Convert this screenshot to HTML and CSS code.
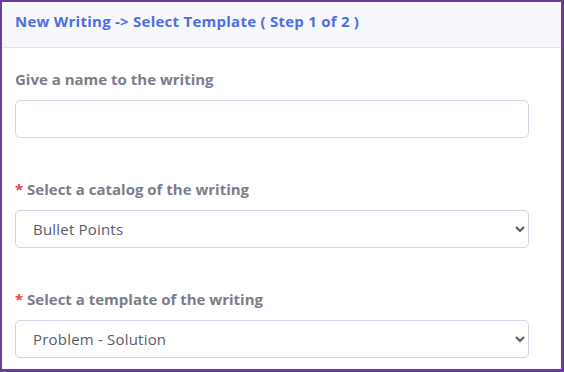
FILE: index.html
```html
<!DOCTYPE html>
<html lang="en">
<head>
  <meta charset="UTF-8" />
  <title>New Writing</title>
  <link rel="stylesheet" href="styles.css">
</head>
<body>
  <div class="card">
    <div class="card-header">New Writing -&gt; Select Template ( Step 1 of 2 )</div>

    <div class="card-body">
      <div class="field">
        <label class="field-label" for="writingName">Give a name to the writing</label>
        <input type="text" id="writingName" class="field-input" />
      </div>

      <div class="field">
        <label class="field-label" for="catalog"><span class="req">*</span> Select a catalog of the writing</label>
        <select id="catalog" class="field-input">
          <option>Bullet Points</option>
        </select>
      </div>

      <div class="field">
        <label class="field-label" for="template"><span class="req">*</span> Select a template of the writing</label>
        <select id="template" class="field-input">
          <option>Problem - Solution</option>
        </select>
      </div>
    </div>
  </div>
</body>
</html>
```

FILE: styles.css
```css
:root {
  --frame-color: #6b3a9f;
  --header-bg: #f7f8fc;
  --header-text: #4d6fe3;
  --label-color: #7c7d8a;
  --input-border: #d8d4e8;
  --input-text: #5a5c66;
  --required: #e8453c;
}

* {
  box-sizing: border-box;
  margin: 0;
  padding: 0;
}

body {
  font-family: 'Open Sans', 'Noto Sans', sans-serif;
  background: #fff;
  width: 564px;
  height: 372px;
  overflow: hidden;
}

.card {
  height: 372px;
  border: 2px solid var(--frame-color);
  border-bottom-width: 3px;
  border-right-width: 3px;
  background: #fff;
}

.card-header {
  background: var(--header-bg);
  color: var(--header-text);
  font-weight: 700;
  font-size: 15px;
  letter-spacing: 0.25px;
  line-height: 21px;
  padding: 9px 13px 15px;
  border-bottom: 1px solid #e2e3ee;
}

.card-body {
  padding: 21px 32px 0 13px;
}

.field {
  margin-bottom: 41px;
}

.field-label {
  display: block;
  color: var(--label-color);
  font-weight: 700;
  font-size: 15px;
  line-height: 21px;
  margin-bottom: 10px;
}

.req {
  color: var(--required);
}

.field-input {
  display: block;
  width: 100%;
  height: 38px;
  border: 1px solid var(--input-border);
  border-radius: 5px;
  background: #fff;
  color: var(--input-text);
  font-family: inherit;
  font-size: 15px;
  letter-spacing: 0.2px;
  padding: 0 13px;
  outline: none;
}
```
